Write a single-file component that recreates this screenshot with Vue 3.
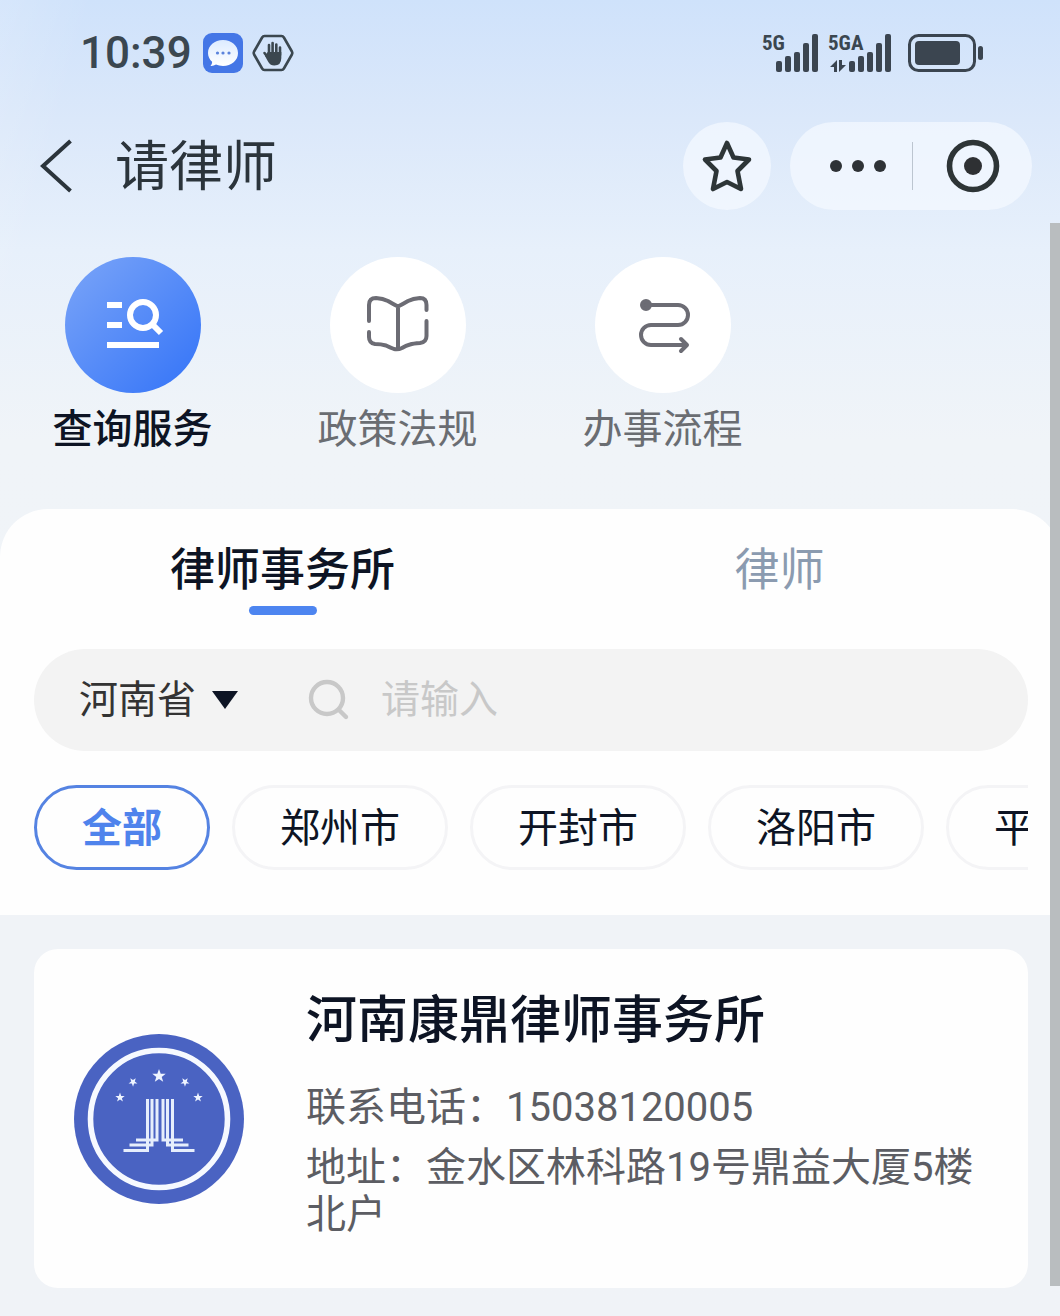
<script setup>
import { ref } from 'vue'

const services = [
  { id: 'query', label: '查询服务' },
  { id: 'policy', label: '政策法规' },
  { id: 'process', label: '办事流程' },
]
const activeService = ref('query')

const tabs = ['律师事务所', '律师']
const activeTab = ref('律师事务所')

const province = ref('河南省')
const keyword = ref('')

const cities = ['全部', '郑州市', '开封市', '洛阳市', '平顶山市']
const activeCity = ref('全部')

const firms = [
  { name: '河南康鼎律师事务所', phone: '15038120005', address: '金水区林科路19号鼎益大厦5楼北户' },
]
</script>

<template>
  <div class="page">
    <div class="status">
      <span class="time">10:39</span>
      <svg class="app-icon" width="40" height="40" viewBox="0 0 40 40">
        <defs>
          <linearGradient id="bubble" x1="0" y1="0" x2="0" y2="1">
            <stop offset="0" stop-color="#dcebff" />
            <stop offset="1" stop-color="#ffffff" />
          </linearGradient>
        </defs>
        <rect width="40" height="40" rx="9" fill="#4476e6" />
        <path d="M20 7c8.500 0 15 5.600 15 13s-6.500 13-15 13c-2.600 0-5-.5-7-1.400-1.600 1.100-3.500 1.400-5.500 1.300 1-1.200 1.700-2.500 1.600-4.200C6.500 26.500 5 23.500 5 20 5 12.600 11.500 7 20 7z" fill="url(#bubble)" />
        <g fill="#5b83dc"><circle cx="14.500" cy="20" r="1.600" /><circle cx="20" cy="20" r="1.600" /><circle cx="26" cy="20" r="1.600" /></g>
      </svg>
      <svg class="hand-icon" width="42" height="38" viewBox="0 0 42 38">
        <path d="M12.500 2h17q1.500 0 2.400 1.500l8 14q.8 1.500 0 3l-8 14q-.9 1.500-2.400 1.500h-17q-1.500 0-2.400-1.500l-8-14q-.8-1.500 0-3l8-14Q11 2 12.500 2z" fill="none" stroke="#3b474f" stroke-width="2.600" />
        <g stroke="#3b474f" stroke-width="2.600" stroke-linecap="round" fill="none">
          <path d="M17 20v-9M20.600 20V9M24.300 20v-9.500M28 21v-7.500M17 25l-4.500-6" />
        </g>
        <path d="M15.700 18h13.600v6q0 7.500-7 7.500-4 0-6-3.500L13 22z" fill="#3b474f" />
      </svg>
      <div class="signals">
        <div class="signal">
          <span class="net">5G</span>
          <svg width="58" height="38" viewBox="0 0 58 38" fill="#3b4550">
            <rect x="14" y="27" width="6" height="11" rx="2" /><rect x="23" y="22" width="6" height="16" rx="2" /><rect x="32" y="18" width="6" height="20" rx="2" /><rect x="41" y="9" width="6" height="29" rx="2" /><rect x="50" y="0" width="6" height="38" rx="2" />
          </svg>
        </div>
        <div class="signal">
          <span class="net">5GA</span>
          <svg width="66" height="38" viewBox="0 0 66 38" fill="#3b4550">
            <path d="M2 33l7-7v12H6v-5zM11 26h3v5h4l-7 7z" />
            <rect x="21" y="27" width="6" height="11" rx="2" /><rect x="30" y="22" width="6" height="16" rx="2" /><rect x="39" y="18" width="6" height="20" rx="2" /><rect x="48" y="9" width="6" height="29" rx="2" /><rect x="57" y="0" width="6" height="38" rx="2" />
          </svg>
        </div>
        <svg class="battery" width="76" height="38" viewBox="0 0 76 38">
          <rect x="1.500" y="1.500" width="65" height="35" rx="9" fill="none" stroke="#3b4550" stroke-width="3" />
          <rect x="7" y="7" width="45" height="24" rx="4" fill="#3b4550" />
          <rect x="70" y="12" width="5" height="14" rx="2.500" fill="#3b4550" />
        </svg>
      </div>
    </div>

    <header class="nav">
      <button class="back" aria-label="返回">
        <svg width="34" height="54" viewBox="0 0 34 54" fill="none" stroke="#2b343b" stroke-width="4"><path d="M31.500 2L4 27l27.500 25" /></svg>
      </button>
      <h1>请律师</h1>
      <button class="star" aria-label="收藏">
        <svg width="52" height="54" viewBox="0 0 52 54" fill="none" stroke="#2d3537" stroke-width="4.600" stroke-linejoin="round"><path d="M26 4l6.500 14.500L48 20.500 36.500 32l3.500 18L26 43 12 50l3.500-18L4 20.500l15.500-2z" /></svg>
      </button>
      <div class="capsule">
        <button class="more" aria-label="更多">
          <svg width="58" height="14" viewBox="0 0 58 14" fill="#2e3236"><circle cx="7" cy="7" r="6" /><circle cx="29" cy="7" r="6" /><circle cx="51" cy="7" r="6" /></svg>
        </button>
        <button class="close" aria-label="关闭">
          <svg width="54" height="54" viewBox="0 0 54 54"><circle cx="27" cy="27" r="23.500" fill="none" stroke="#2d3436" stroke-width="5.600" /><circle cx="27" cy="27" r="9" fill="#2e3033" /></svg>
        </button>
      </div>
    </header>

    <nav class="services">
      <button v-for="s in services" :key="s.id" class="service" :class="{ active: s.id === activeService }" @click="activeService = s.id">
        <span class="disc">
          <svg v-if="s.id === 'query'" width="68" height="68" viewBox="0 0 68 68" fill="none" stroke="#fff" stroke-width="6">
            <path d="M8 14h15M8 34h15M8 54h52" /><circle cx="44" cy="24" r="13" /><path d="M53 33l9 9" />
          </svg>
          <svg v-else-if="s.id === 'policy'" width="68" height="68" viewBox="0 0 68 68" fill="none" stroke="#6c6c74" stroke-width="4" stroke-linecap="round" stroke-linejoin="round">
            <path d="M34 16v42M5 30V14q0-7 7-7 7 .5 12 3 5 3 10 5.500Q39 13 44 10q5-2.500 12-3 6.500 0 6.500 7v5M5 41v5q0 6 6 7 6 0 11 1.500 4 2 8 3.500 4 1 8-1 4-2.500 8-3.500 3-1 10-1.500 6.500-1 6.500-7V30" />
          </svg>
          <svg v-else width="68" height="68" viewBox="0 0 68 68" fill="none" stroke="#6c6c74" stroke-width="4" stroke-linecap="round" stroke-linejoin="round">
            <circle cx="17" cy="14" r="4" fill="#6c6c74" /><path d="M17 14h32a10 10 0 0 1 0 20H22a10 10 0 0 0 0 20h35M52 48l6 6-6 6" />
          </svg>
        </span>
        <span class="service-label">{{ s.label }}</span>
      </button>
    </nav>

    <section class="sheet">
      <div class="tabs" role="tablist">
        <button v-for="t in tabs" :key="t" class="tab" role="tab" :aria-selected="t === activeTab" :class="{ active: t === activeTab }" @click="activeTab = t">{{ t }}</button>
      </div>

      <form class="search" @submit.prevent>
        <label class="province">
          <select v-model="province" aria-label="省份"><option>河南省</option></select>
          <svg width="26" height="18" viewBox="0 0 26 18"><path d="M0 0h26L13 18z" fill="#0d1424" /></svg>
        </label>
        <label class="keyword">
          <svg width="42" height="42" viewBox="0 0 42 42" fill="none" stroke="#c8c8c8" stroke-width="4.400" stroke-linecap="round"><circle cx="19" cy="19" r="16" /><path d="M31 31l7 7" /></svg>
          <input v-model="keyword" type="text" placeholder="请输入" aria-label="搜索关键词" />
        </label>
      </form>

      <div class="cities">
        <button v-for="c in cities" :key="c" class="city" :class="{ active: c === activeCity }" @click="activeCity = c">{{ c }}</button>
      </div>
    </section>

    <main class="list">
      <article v-for="f in firms" :key="f.name" class="card">
        <svg class="logo" width="170" height="170" viewBox="0 0 170 170">
          <defs><path id="firm-star" d="M0-7l1.700 4.700 5 .1-4 3.100 1.500 4.800L0 2.900l-4.200 2.800 1.500-4.800-4-3.100 5-.1z" fill="#eef4ff" /></defs>
          <circle cx="85" cy="85" r="85" fill="#4a63c2" />
          <circle cx="85" cy="85" r="68.500" fill="none" stroke="#f6f9ff" stroke-width="5.600" />
          <use href="#firm-star" transform="translate(85 42)" />
          <use href="#firm-star" transform="translate(59 48) rotate(36) scale(.66)" />
          <use href="#firm-star" transform="translate(111 48) rotate(-36) scale(.66)" />
          <use href="#firm-star" transform="translate(46 63.500) scale(.7)" />
          <use href="#firm-star" transform="translate(124 63.500) scale(.7)" />
          <g fill="none" stroke="#e6eefc" stroke-width="3">
            <path d="M73.500 65v51.500H49.500M78 65v46H55.500M83 65v41H62" />
            <path d="M98.500 65v51.500H120.500M93.500 65v46H114.500M89 65v41H109" />
          </g>
        </svg>
        <div class="info">
          <h2>{{ f.name }}</h2>
          <p>联系电话：{{ f.phone }}</p>
          <p>地址：{{ f.address }}</p>
        </div>
      </article>
    </main>

    <div class="scrollbar"></div>
  </div>
</template>

<style>
body {
  background: #f0f3f7;
}
</style>

<style scoped>
.page {
  position: relative;
  padding-bottom: 28px;
  overflow: hidden;
  font-family: Roboto, "Noto Sans CJK SC", sans-serif;
  color: #0d1424;
  background:
    linear-gradient(105deg, rgba(255, 255, 255, 0.16) 0, rgba(255, 255, 255, 0) 90px),
    linear-gradient(#cfe2fb 0, #dbe8fa 120px, #e7f0fb 250px, #f0f4f8 440px, #f0f3f7 100%);
}

button,
input,
select {
  margin: 0;
  padding: 0;
  border: 0;
  background: none;
  font: inherit;
  color: inherit;
}

svg {
  display: block;
  flex: none;
}

.status {
  display: flex;
  align-items: center;
  height: 106px;
  padding: 0 76px 0 80px;
  color: #3b4750;
}

.time {
  font-size: 44px;
  font-weight: 500;
  line-height: 50px;
}

.app-icon {
  margin-left: 11px;
}

.hand-icon {
  margin-left: 9px;
}

.signals {
  display: flex;
  gap: 8px;
  margin-left: auto;
}

.signal {
  position: relative;
}

.net {
  position: absolute;
  top: -1px;
  left: 0;
  font: 700 21px/20px "Liberation Sans Narrow", "Roboto Condensed", Roboto, sans-serif;
}

.battery {
  margin-left: 6px;
}

.nav {
  display: flex;
  align-items: center;
  height: 88px;
  padding: 16px 28px 0 39px;
}

h1 {
  margin: 0 auto 0 42px;
  padding-top: 4px;
  font-size: 54px;
  font-weight: 400;
  line-height: 64px;
  color: #2b343b;
}

.star,
.capsule {
  display: flex;
  align-items: center;
  justify-content: center;
  height: 88px;
  border-radius: 44px;
  background: rgba(245, 250, 255, 0.7);
}

.star {
  width: 88px;
  margin-right: 19px;
}

.capsule {
  width: 242px;
}

.more,
.close {
  display: flex;
  align-items: center;
  justify-content: center;
  height: 48px;
}

.more {
  width: 123px;
  padding-left: 14px;
  border-right: 1px solid #bcc5d0;
}

.close {
  flex: 1;
}

.services {
  display: grid;
  grid-template-columns: repeat(4, 1fr);
  padding: 47px 0 55px;
}

.service {
  display: flex;
  flex-direction: column;
  align-items: center;
  gap: 13px;
  color: #6a6d72;
}

.disc {
  display: flex;
  align-items: center;
  justify-content: center;
  width: 136px;
  height: 136px;
  border-radius: 50%;
  background: #fff;
}

.service.active {
  color: #0d1424;
}

.service.active .disc {
  background: linear-gradient(135deg, #7ba5f8, #3a78f8 90%);
}

.service-label {
  font-size: 40px;
  line-height: 48px;
}

.service.active .service-label {
  font-weight: 500;
}

.sheet {
  padding: 30px 32px 45px 34px;
  border-radius: 48px 48px 0 0;
  background: #fefefe;
}

.tabs {
  display: grid;
  grid-template-columns: 1fr 1fr;
}

.tab {
  display: flex;
  flex-direction: column;
  align-items: center;
  height: 77px;
  font-size: 45px;
  line-height: 64px;
  color: #8b9bb0;
}

.tab.active {
  font-weight: 500;
  color: #0d1424;
}

.tab.active::after {
  content: "";
  width: 68px;
  height: 9px;
  margin-top: 3px;
  border-radius: 5px;
  background: #4d85f0;
}

.search {
  display: flex;
  align-items: center;
  height: 102px;
  margin-top: 33px;
  padding: 0 45px;
  border-radius: 51px;
  background: #f3f3f3;
  font-size: 39px;
}

.province,
.keyword {
  display: flex;
  align-items: center;
}

.province {
  gap: 15px;
  color: #333;
}

select {
  appearance: none;
}

.keyword {
  flex: 1;
  gap: 31px;
  margin-left: 70px;
}

input {
  flex: 1;
  min-width: 0;
  outline: 0;
}

input::placeholder {
  color: #c8c8c8;
  opacity: 1;
}

.cities {
  display: flex;
  gap: 22px;
  margin-top: 34px;
  overflow-x: auto;
  scrollbar-width: none;
}

.city {
  flex: none;
  height: 85px;
  padding: 2px 45px 0;
  border: 3px solid #f4f4f6;
  border-radius: 43px;
  font-size: 40px;
  line-height: 48px;
}

.city.active {
  border-color: #5583e2;
  font-weight: 700;
  color: #4f83ec;
}

.list {
  padding: 34px 32px 0 34px;
  background: #f0f3f7;
}

.card {
  display: flex;
  align-items: center;
  gap: 62px;
  padding: 42px 28px 50px 40px;
  border-radius: 24px;
  background: #fefefe;
}

.logo {
  margin-top: 8px;
}

.info {
  flex: 1;
}

h2 {
  margin: 0 0 33px;
  font-size: 51px;
  font-weight: 500;
  line-height: 60px;
}

p {
  margin: 13px 0 0;
  font-size: 40px;
  line-height: 47px;
  color: #5c5d63;
}

.scrollbar {
  position: absolute;
  top: 223px;
  right: 0;
  bottom: 30px;
  width: 10px;
  background: #b9bdbf;
}
</style>
